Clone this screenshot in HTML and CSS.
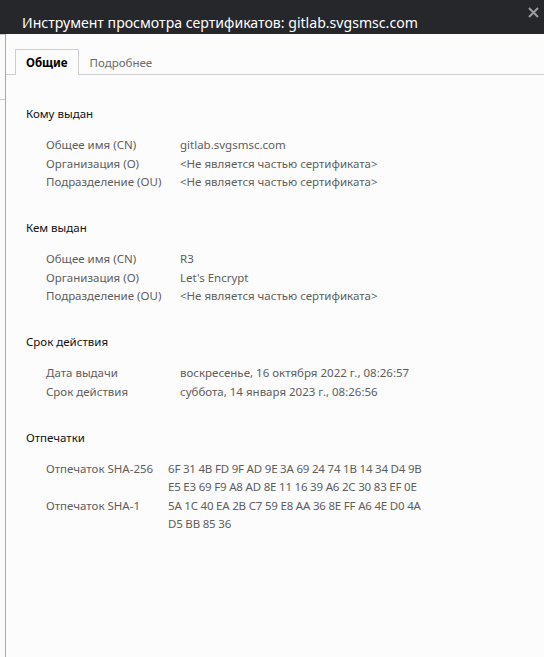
FILE: index.html
```html
<!DOCTYPE html>
<html lang="ru">
<head>
<meta charset="utf-8">
<title>Инструмент просмотра сертификатов</title>
<link rel="stylesheet" href="styles.css">
</head>
<body>
<header class="titlebar">
  <h1 class="title">Инструмент просмотра сертификатов: gitlab.svgsmsc.com</h1>
  <span class="close" aria-label="Закрыть">
    <svg width="11" height="11" viewBox="0 0 11 11"><path d="M1 1 L10 10 M10 1 L1 10" stroke="#9a9ca0" stroke-width="2" fill="none"/></svg>
  </span>
</header>
<div class="frame">
  <div class="side"><span class="side-line one"></span><span class="side-line two"></span></div>
  <main class="dialog">
    <nav class="tabs">
      <span class="tab active">Общие</span>
      <span class="tab">Подробнее</span>
    </nav>
    <div class="content">
      <section class="section">
        <h2 class="heading">Кому выдан</h2>
        <div class="rows">
          <span class="label">Общее имя (CN)</span><span class="value">gitlab.svgsmsc.com</span>
          <span class="label">Организация (O)</span><span class="value">&lt;Не является частью сертификата&gt;</span>
          <span class="label">Подразделение (OU)</span><span class="value">&lt;Не является частью сертификата&gt;</span>
        </div>
      </section>
      <section class="section">
        <h2 class="heading">Кем выдан</h2>
        <div class="rows">
          <span class="label">Общее имя (CN)</span><span class="value">R3</span>
          <span class="label">Организация (O)</span><span class="value">Let's Encrypt</span>
          <span class="label">Подразделение (OU)</span><span class="value">&lt;Не является частью сертификата&gt;</span>
        </div>
      </section>
      <section class="section">
        <h2 class="heading">Срок действия</h2>
        <div class="rows">
          <span class="label">Дата выдачи</span><span class="value">воскресенье, 16 октября 2022 г., 08:26:57</span>
          <span class="label">Срок действия</span><span class="value">суббота, 14 января 2023 г., 08:26:56</span>
        </div>
      </section>
      <section class="section">
        <h2 class="heading">Отпечатки</h2>
        <div class="rows prints">
          <span class="label">Отпечаток SHA-256</span><span class="value"><span class="line">6F 31 4B FD 9F AD 9E 3A 69 24 74 1B 14 34 D4 9B</span><span class="line">E5 E3 69 F9 A8 AD 8E 11 16 39 A6 2C 30 83 EF 0E</span></span>
          <span class="label">Отпечаток SHA-1</span><span class="value"><span class="line">5A 1C 40 EA 2B C7 59 E8 AA 36 8E FF A6 4E D0 4A</span><span class="line">D5 BB 85 36</span></span>
        </div>
      </section>
    </div>
  </main>
</div>
</body>
</html>
```

FILE: styles.css
```css
* { box-sizing: border-box; }
html, body { margin: 0; padding: 0; }
body {
  width: 544px;
  height: 657px;
  overflow: hidden;
  background: #fcfcfc;
  font-family: "Noto Sans", "Open Sans", sans-serif;
  font-size: 11.5px;
  color: #5e5e5e;
  display: flex;
  flex-direction: column;
}
.titlebar {
  height: 34px;
  background: #26272b;
  display: flex;
  align-items: flex-end;
  justify-content: space-between;
  padding: 0 5px 1px 22px;
  flex: none;
}
.title {
  margin: 0;
  font-weight: normal;
  font-size: 14.1px;
  line-height: 20px;
  color: #ffffff;
  white-space: nowrap;
}
.close {
  align-self: flex-start;
  margin-top: 7px;
  width: 11px;
  height: 11px;
  display: block;
}
.close svg { display: block; }
.frame {
  flex: 1;
  display: flex;
}
.side {
  width: 6px;
  flex: none;
  background: #fbfbfb;
  border-right: 1px solid #a8a8a8;
  display: flex;
  flex-direction: column;
}
.side-line {
  display: block;
  height: 1px;
  background: #c8c8c8;
}
.side-line.two { margin-top: 64px; }
.dialog {
  flex: 1;
  background: #fcfcfc;
  padding-top: 15px;
}
.tabs {
  display: flex;
  padding-left: 9px;
  border-bottom: 1px solid #cfcfcf;
  height: 26px;
}
.tab {
  display: block;
  padding: 0 10px;
  line-height: 25px;
  color: #6a6a6a;
  border: 1px solid transparent;
  border-bottom: none;
}
.tab.active {
  color: #000;
  font-weight: bold;
  background: #fcfcfc;
  border-color: #cfcfcf;
  height: 26px;
}
.content {
  padding: 30px 0 0 20px;
}
.section { margin-bottom: 27.5px; }
.heading {
  margin: 0 0 12.5px;
  font-size: 11.5px;
  font-weight: normal;
  color: #111;
  line-height: 18.5px;
}
.rows {
  display: grid;
  grid-template-columns: 134px 1fr;
  padding-left: 20px;
  line-height: 18.5px;
}
.rows.prints { grid-template-columns: 122px 1fr; }
.prints .value { letter-spacing: -0.2px; }
.line { display: block; }
```
